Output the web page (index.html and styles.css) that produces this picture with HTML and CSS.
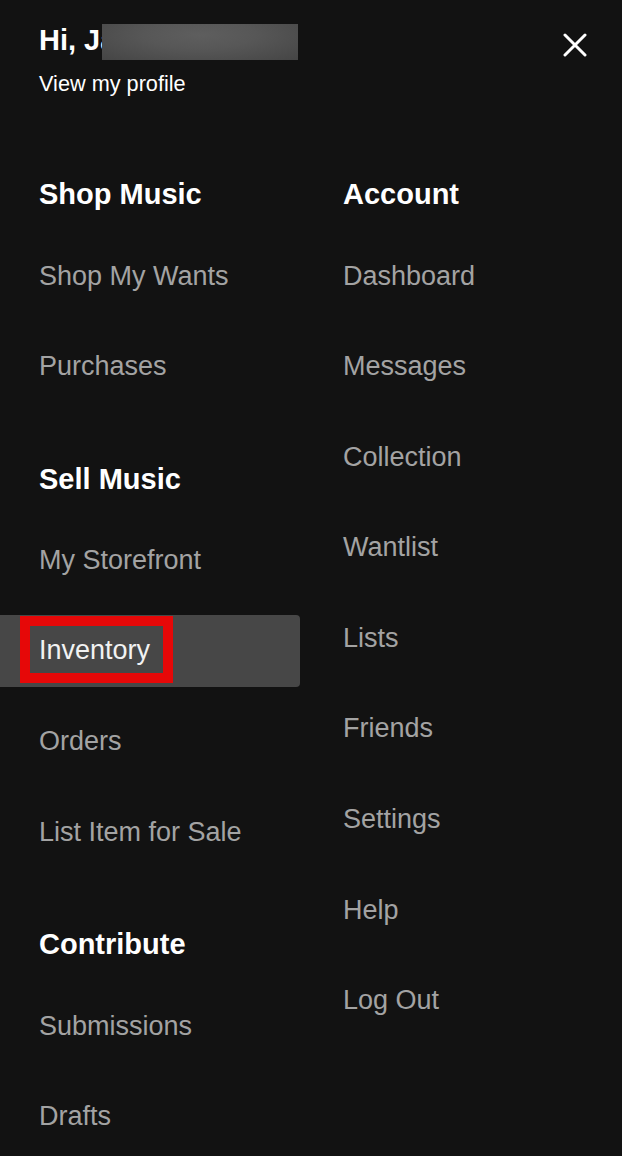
FILE: index.html
```html
<!DOCTYPE html>
<html lang="en">
<head>
<meta charset="utf-8">
<title>Menu</title>
<link rel="stylesheet" href="styles.css">
</head>
<body>
<div class="menu">
  <header class="top">
    <div class="user">
      <div class="greeting"><span class="hi">Hi, Ja</span><span class="blur"></span></div>
      <a class="profile" href="#">View my profile</a>
    </div>
    <button class="close" aria-label="Close">
      <svg width="24" height="24" viewBox="0 0 24 24"><path d="M2 2 L22 22 M22 2 L2 22" stroke="#fff" stroke-width="3" stroke-linecap="round" fill="none"/></svg>
    </button>
  </header>
  <div class="cols">
    <nav class="col left">
      <section class="sec">
        <h2 class="head">Shop Music</h2>
        <a class="item" href="#">Shop My Wants</a>
        <a class="item" href="#">Purchases</a>
      </section>
      <section class="sec">
        <h2 class="head">Sell Music</h2>
        <a class="item" href="#">My Storefront</a>
        <a class="item active" href="#"><span class="mark">Inventory</span></a>
        <a class="item" href="#">Orders</a>
        <a class="item" href="#">List Item for Sale</a>
      </section>
      <section class="sec">
        <h2 class="head">Contribute</h2>
        <a class="item" href="#">Submissions</a>
        <a class="item" href="#">Drafts</a>
      </section>
    </nav>
    <nav class="col right">
      <section class="sec">
        <h2 class="head">Account</h2>
        <a class="item" href="#">Dashboard</a>
        <a class="item" href="#">Messages</a>
        <a class="item" href="#">Collection</a>
        <a class="item" href="#">Wantlist</a>
        <a class="item" href="#">Lists</a>
        <a class="item" href="#">Friends</a>
        <a class="item" href="#">Settings</a>
        <a class="item" href="#">Help</a>
        <a class="item" href="#">Log Out</a>
      </section>
    </nav>
  </div>
</div>
</body>
</html>
```

FILE: styles.css
```css
* { box-sizing: border-box; }
html, body {
  margin: 0;
  padding: 0;
  background: #121212;
}
body {
  font-family: "Liberation Sans", Arial, Helvetica, sans-serif;
  color: #fff;
  width: 622px;
  height: 1156px;
  overflow: hidden;
}
.top {
  display: flex;
  justify-content: space-between;
  align-items: flex-start;
  padding: 23px 35px 0 39px;
}
.user {
  display: flex;
  flex-direction: column;
}
.greeting {
  position: relative;
  height: 37px;
  line-height: 35px;
  font-size: 29px;
  font-weight: bold;
  white-space: nowrap;
}
.blur {
  position: absolute;
  left: 63px;
  top: 1px;
  width: 196px;
  height: 36px;
  background: radial-gradient(ellipse at 50% 30%, #5e5e5e 0%, #575757 40%, #454545 100%);
}
.profile {
  margin-top: 12px;
  font-size: 21.7px;
  line-height: 24px;
  color: #fff;
  text-decoration: none;
}
.close {
  margin-top: 10px;
  padding: 0;
  border: 0;
  background: none;
  width: 24px;
  height: 24px;
  display: flex;
}
.cols {
  display: grid;
  grid-template-columns: 300px 1fr;
  column-gap: 43px;
  margin-top: 78px;
}
.col {
  display: flex;
  flex-direction: column;
  gap: 56px;
}
.sec {
  display: flex;
  flex-direction: column;
}
.head {
  margin: 0 0 26px;
  height: 40px;
  line-height: 40px;
  font-size: 29px;
  font-weight: bold;
  color: #fff;
}
.left .head { padding-left: 39px; }
.item {
  display: flex;
  align-items: center;
  height: 72px;
  margin-bottom: 18.6px;
  font-size: 27px;
  color: #a3a3a3;
  text-decoration: none;
}
.item:last-child { margin-bottom: 0; }
.left .item { padding-left: 39px; }
.item.active {
  background: #474747;
  border-radius: 0 4px 4px 0;
  color: #f2f2f2;
  padding-left: 20px;
}
.mark {
  display: inline-flex;
  align-items: center;
  height: 67px;
  margin-top: -3px;
  padding: 2px 13px 0 9px;
  border: 10px solid #e60808;
}
```
